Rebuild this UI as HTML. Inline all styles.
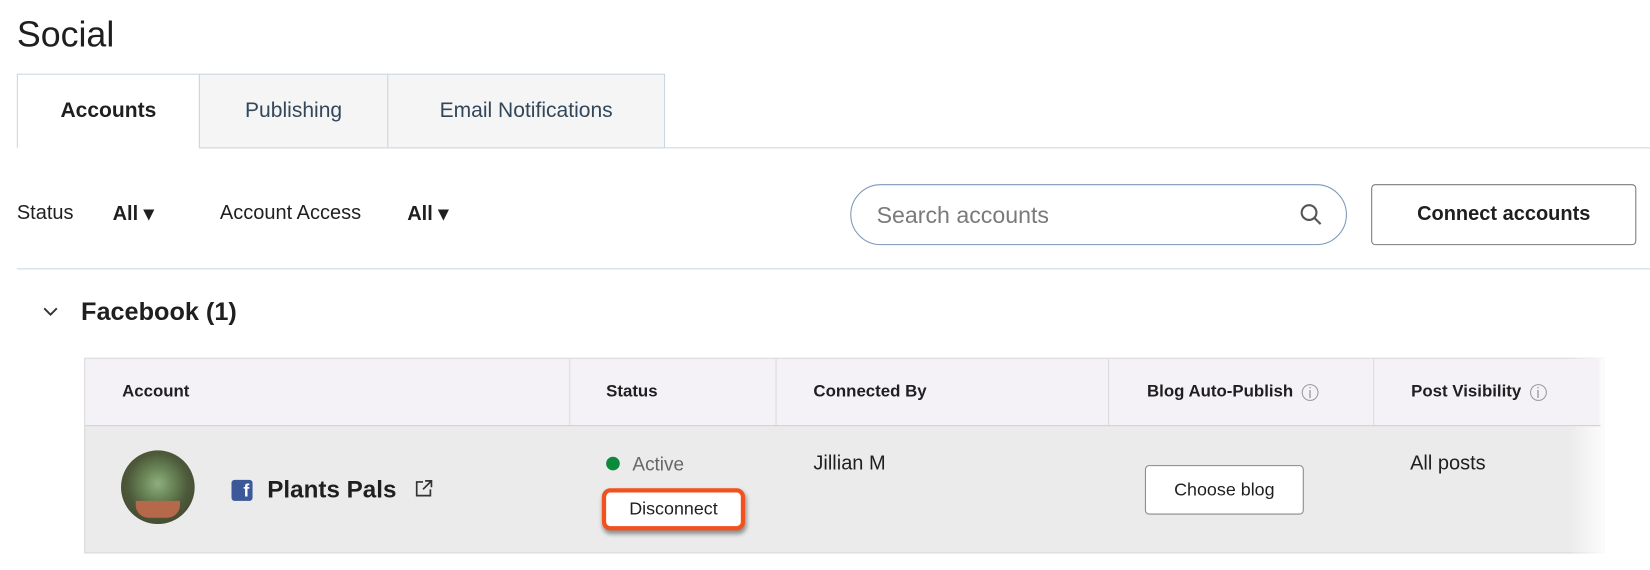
<!DOCTYPE html><html><head><style>
*{box-sizing:border-box;margin:0;padding:0}
html,body{width:1650px;height:570px;overflow:hidden;background:#fff}
body{font-family:"Liberation Sans",sans-serif;color:#213343;position:relative}
#w{position:absolute;left:0;top:0;width:1568px;height:542px;transform:scale(1.0523);transform-origin:0 0}
.a{position:absolute;white-space:nowrap}
.tab{position:absolute;top:70px;height:71px;border:1px solid #cbd6e2;background:#f5f5f5;font-size:20px;display:flex;align-items:center;justify-content:center;color:#33475b}
.th{position:absolute;top:341px;height:64px;background:#f5f2f7;border-right:1px solid #d9d9d9;font-size:16px;font-weight:bold;display:flex;align-items:center;color:#1f1f1f}
</style></head><body><div id="w">
<div class="a" style="left:16px;top:14px;font-size:34px;color:#1f1f1f">Social</div>
<div class="a" style="left:16px;top:140px;width:1610px;height:1px;background:#cbd6e2"></div>
<div class="tab" style="left:16px;width:174px;background:#fff;border-bottom:1px solid #fff;font-weight:bold;color:#1f1f1f">Accounts</div>
<div class="tab" style="left:189px;width:180px">Publishing</div>
<div class="tab" style="left:368px;width:264px">Email Notifications</div>
<div class="a" style="left:16px;top:192px;font-size:19px;color:#1f1f1f">Status</div>
<div class="a" style="left:107px;top:192px;font-size:19px;font-weight:bold;color:#1f1f1f">All ▾</div>
<div class="a" style="left:209px;top:192px;font-size:19px;color:#1f1f1f">Account Access</div>
<div class="a" style="left:387px;top:192px;font-size:19px;font-weight:bold;color:#1f1f1f">All ▾</div>
<div class="a" style="left:808px;top:175px;width:472px;height:58px;border:1px solid #7c98b6;border-radius:29px;font-size:22px;color:#7a7a7a;padding:16px 24px">Search accounts
<svg style="position:absolute;right:22px;top:17px" width="22" height="22" viewBox="0 0 22 22"><circle cx="9" cy="9" r="7" fill="none" stroke="#555" stroke-width="2"/><path d="M14 14l6 6" stroke="#555" stroke-width="2"/></svg></div>
<div class="a" style="left:1303px;top:175px;width:252px;height:58px;border:1px solid #7a7a7a;border-radius:4px;font-size:19px;font-weight:bold;color:#1f1f1f;text-align:center;line-height:56px">Connect accounts</div>
<div class="a" style="left:16px;top:255px;width:1610px;height:1px;background:#cbd6e2"></div>
<svg class="a" style="left:40px;top:290px" width="16" height="12"><path d="M2 3l6 6 6-6" fill="none" stroke="#333" stroke-width="1.8"/></svg>
<div class="a" style="left:77px;top:283px;font-size:24px;font-weight:bold;color:#1f1f1f">Facebook (1)</div>
<div class="a" style="left:80px;top:340px;width:1445px;height:186px;border:1px solid #d9d9d9;background:#ebebeb"></div>
<div class="a" style="left:1490px;top:340px;width:40px;height:190px;background:linear-gradient(90deg,rgba(255,255,255,0),#fff)"></div>
<div class="th" style="left:81px;width:461px;padding-left:35px">Account</div>
<div class="th" style="left:542px;width:196px;padding-left:34px">Status</div>
<div class="th" style="left:738px;width:316px;padding-left:35px">Connected By</div>
<div class="th" style="left:1054px;width:252px;padding-left:36px">Blog Auto-Publish <span style="font-weight:normal;color:#999;margin-left:8px;font-size:14px;border:1px solid #999;border-radius:50%;width:16px;height:16px;line-height:14px;text-align:center">i</span></div>
<div class="th" style="left:1306px;width:214px;padding-left:35px;border-right:none">Post Visibility <span style="font-weight:normal;color:#999;margin-left:8px;font-size:14px;border:1px solid #999;border-radius:50%;width:16px;height:16px;line-height:14px;text-align:center">i</span></div>
<div class="a" style="left:81px;top:404px;width:1440px;height:1px;background:#d0d0d0"></div>
<div class="a" style="left:115px;top:428px;width:70px;height:70px;border-radius:50%;background:radial-gradient(circle at 50% 45%,#8fae7f 0,#6d8a5a 25%,#4d5a3a 55%,#3a3a2a 100%);overflow:hidden"><div style="position:absolute;left:14px;top:48px;width:42px;height:16px;background:#b5694a;border-radius:0 0 12px 12px"></div></div>
<div class="a" style="left:220px;top:456px;width:20px;height:20px;background:#3b5998;border-radius:3px;color:#fff;font-weight:bold;font-size:17px;text-align:right;padding-right:3px;line-height:22px;overflow:hidden">f</div>
<div class="a" style="left:254px;top:452px;font-size:23px;font-weight:bold;color:#1f1f1f">Plants Pals</div>
<svg class="a" style="left:394px;top:455px" width="18" height="18" viewBox="0 0 18 18"><path d="M8 3H2v13h13v-6M10 2h6v6M16 2l-8 8" fill="none" stroke="#333" stroke-width="1.6"/></svg>
<div class="a" style="left:576px;top:434px;width:13px;height:13px;border-radius:50%;background:#0b8a3c"></div>
<div class="a" style="left:601px;top:431px;font-size:18px;color:#666">Active</div>
<div class="a" style="left:572px;top:464px;width:136px;height:40px;border:4px solid #f2501c;border-radius:8px;background:#fff;box-shadow:1px 3px 4px rgba(0,0,0,.4);font-size:17px;text-align:center;line-height:32px;color:#1f1f1f">Disconnect</div>
<div class="a" style="left:773px;top:430px;font-size:19px;color:#1f1f1f">Jillian M</div>
<div class="a" style="left:1088px;top:442px;width:151px;height:47px;border:1px solid #888;border-radius:4px;background:#fff;font-size:17px;text-align:center;line-height:45px;color:#1f1f1f">Choose blog</div>
<div class="a" style="left:1340px;top:430px;font-size:19px;color:#1f1f1f">All posts</div>
</div></body></html>
